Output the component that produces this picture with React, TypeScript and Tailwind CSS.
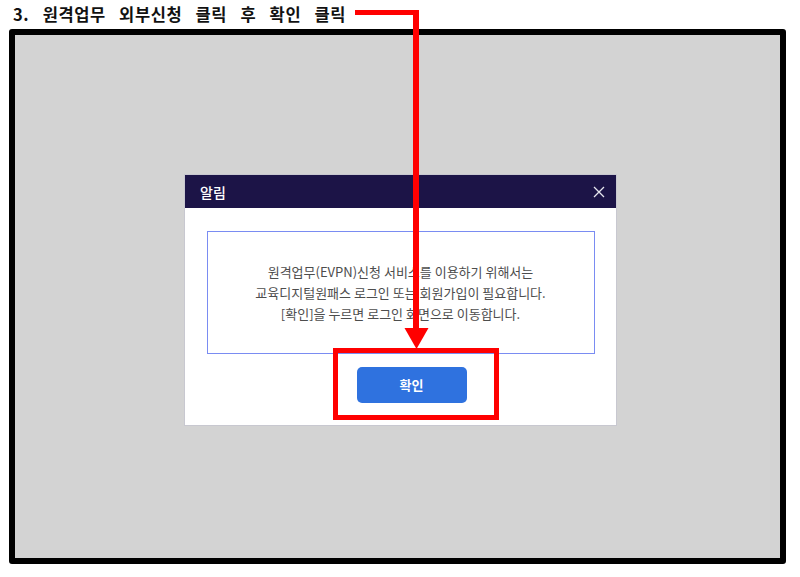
import React from "react";

export default function App() {
  return (
    <div className="relative w-[800px] h-[577px] bg-white overflow-hidden" style={{ fontFamily: '"Noto Sans CJK KR", "Noto Sans", sans-serif' }}>
      <div className="h-[29px] pl-[13px] text-[16.5px] font-bold leading-[28px] text-[#111] tracking-[0.6px] [word-spacing:9px]">
        3. 원격업무 외부신청 클릭 후 확인 클릭
      </div>
      <div className="ml-[9px] w-[777px] h-[535px] border-[6px] border-black rounded-[3px] bg-[#d3d3d3] pl-[169px] pt-[139px]">
        <div className="w-[433px] h-[252px] bg-white flex flex-col border border-[#c8c8d0]">
          <div className="h-[33px] bg-[#1c1447] flex items-center justify-between pl-[15px] pr-[11px]">
            <span className="text-white text-[14px] font-medium leading-none">알림</span>
            <svg width="12" height="12" viewBox="0 0 12 12" className="text-[#e6e6ee]">
              <path d="M1 1 L11 11 M11 1 L1 11" stroke="currentColor" strokeWidth="1.3" fill="none" />
            </svg>
          </div>
          <div className="flex flex-col items-center pt-[23px]">
            <div className="w-[388px] h-[123px] border border-[#7a8cf2] flex flex-col items-center justify-center text-[13px] leading-[21px] text-[#4d4d4d] text-center">
              <p>원격업무(EVPN)신청 서비스를 이용하기 위해서는</p>
              <p>교육디지털원패스 로그인 또는 회원가입이 필요합니다.</p>
              <p>[확인]을 누르면 로그인 화면으로 이동합니다.</p>
            </div>
            <button className="mt-[13px] ml-[22px] w-[110px] h-[36px] rounded-[5px] bg-[#2f72df] text-white text-[13px] font-bold">
              확인
            </button>
          </div>
        </div>
      </div>
      <div className="absolute left-[333px] top-[348px] w-[166px] h-[72px] border-[5px] border-[#ff0000] pointer-events-none" />
      <svg className="absolute left-0 top-0 pointer-events-none" width="800" height="577" viewBox="0 0 800 577">
        <path d="M355 10 H419 V15 H355 Z" fill="#ff0000" />
        <path d="M413 10 H419 V330 H413 Z" fill="#ff0000" />
        <path d="M404.5 328 L428.5 328 L416.5 349 Z" fill="#ff0000" />
      </svg>
    </div>
  );
}
